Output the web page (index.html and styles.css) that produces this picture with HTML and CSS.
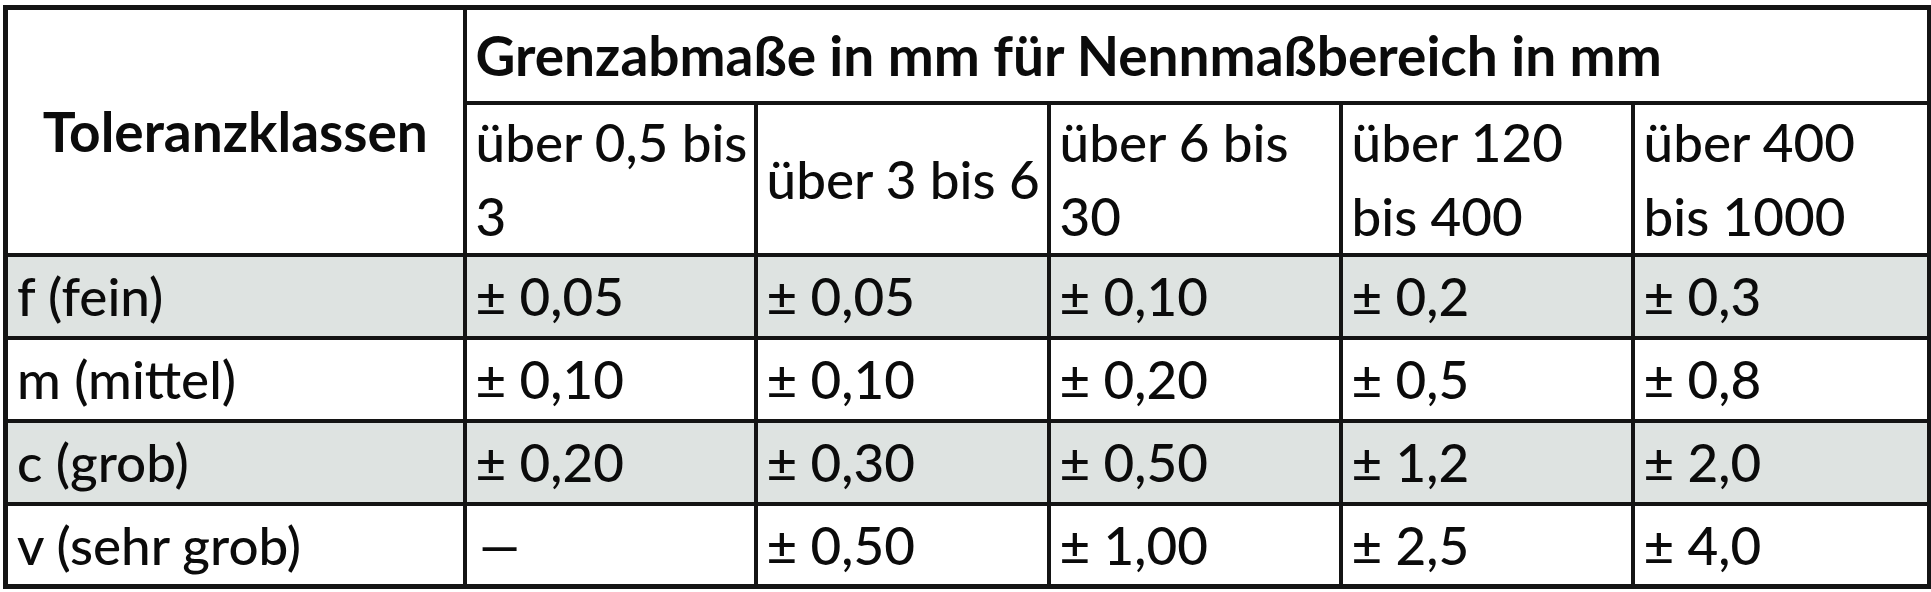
FILE: index.html
```html
<!DOCTYPE html>
<html lang="de">
<head>
<meta charset="utf-8">
<title>Toleranzklassen</title>
<link rel="stylesheet" href="styles.css">
</head>
<body>
<table class="tol">
  <colgroup>
    <col class="c-first">
    <col class="c2">
    <col class="c3">
    <col class="c4">
    <col class="c5">
    <col class="c6">
  </colgroup>
  <thead>
    <tr class="r-head1">
      <th class="th-class" rowspan="2">Toleranzklassen</th>
      <th class="th-group" colspan="5">Grenzabmaße in mm für Nennmaßbereich in mm</th>
    </tr>
    <tr class="r-head2">
      <th class="th-range">über 0,5 bis<br>3</th>
      <th class="th-range">über 3 bis 6</th>
      <th class="th-range">über 6 bis<br>30</th>
      <th class="th-range">über 120<br>bis 400</th>
      <th class="th-range">über 400<br>bis 1000</th>
    </tr>
  </thead>
  <tbody>
    <tr class="r-data shaded">
      <td>f (fein)</td><td>± 0,05</td><td>± 0,05</td><td>± 0,10</td><td>± 0,2</td><td>± 0,3</td>
    </tr>
    <tr class="r-data">
      <td>m (mittel)</td><td>± 0,10</td><td>± 0,10</td><td>± 0,20</td><td>± 0,5</td><td>± 0,8</td>
    </tr>
    <tr class="r-data shaded">
      <td>c (grob)</td><td>± 0,20</td><td>± 0,30</td><td>± 0,50</td><td>± 1,2</td><td>± 2,0</td>
    </tr>
    <tr class="r-data">
      <td>v (sehr grob)</td><td class="dash"><span class="dash-glyph">–</span></td><td>± 0,50</td><td>± 1,00</td><td>± 2,5</td><td>± 4,0</td>
    </tr>
  </tbody>
</table>
</body>
</html>
```
FILE: styles.css
```css
html, body {
  margin: 0;
  padding: 0;
  background: #ffffff;
}

body {
  padding: 5px 0 0 3px;
  font-family: Lato, "Open Sans", "Noto Sans", sans-serif;
  color: #0b0b0b;
}

.tol {
  border-collapse: collapse;
  table-layout: fixed;
  width: 1924px;
  border: 5px solid #141414;
}

.c-first { width: 459px; }
.c2 { width: 291px; }
.c3 { width: 293px; }
.c4 { width: 292px; }
.c5 { width: 292px; }
.c6 { width: 297px; }

.tol th,
.tol td {
  border: 4px solid #141414;
  padding: 0 0 0 9px;
  text-align: left;
  vertical-align: middle;
  font-size: 53px;
  line-height: 74px;
  font-weight: 500;
  white-space: nowrap;
  overflow: hidden;
}

.r-head1 { height: 95px; }
.r-head2 { height: 151px; }
.r-data { height: 83px; }

.tol .th-class {
  text-align: center;
  padding: 0;
  font-size: 55px;
  font-weight: 700;
}

.tol .th-group {
  font-size: 55px;
  font-weight: 700;
}

.tol .dash {
  padding-left: 8px;
}

.dash-glyph {
  display: inline-block;
  transform: scaleX(1.6);
  transform-origin: left center;
}

.shaded td {
  background: #dee3e1;
}
```
